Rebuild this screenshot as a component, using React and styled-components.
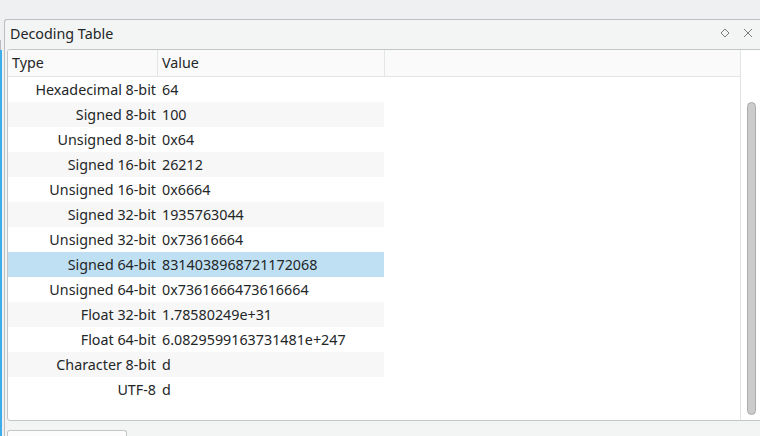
import React from "react";
import styled, { createGlobalStyle } from "styled-components";

const Global = createGlobalStyle`
  html, body { margin: 0; padding: 0; background: #eff0f1; }
  body { font-family: "Noto Sans", "DejaVu Sans", sans-serif; color: #232627; }
  * { box-sizing: border-box; }
`;

const Page = styled.div`
  width: 760px;
  height: 436px;
  overflow: hidden;
  display: flex;
  flex-direction: column;
  background: #eff0f1;
`;

const TopStrip = styled.div`
  height: 19px;
  flex: none;
`;

const Main = styled.div`
  flex: 1;
  display: flex;
  min-height: 0;
`;

const LeftEdge = styled.div`
  width: 4px;
  flex: none;
  display: flex;
  flex-direction: column;
  padding-top: 21px;
`;

const EdgeGray = styled.div`
  width: 1px;
  height: 10px;
  background: #b9bcbf;
`;

const EdgeBlue = styled.div`
  width: 2px;
  flex: 1;
  background: #3daee9;
`;

const Dock = styled.div`
  flex: 1;
  margin-right: -6px;
  display: flex;
  flex-direction: column;
  background: #f3f4f4;
  border-top: 1px solid #bcbfc2;
  border-left: 1px solid #bcbfc2;
  border-top-left-radius: 3px;
`;

const TitleBar = styled.div`
  height: 29px;
  flex: none;
  display: flex;
  align-items: center;
  padding: 0 0 3px 5px;
  font-size: 14.3px;
`;

const Title = styled.div`
  flex: 1;
`;

const TitleButton = styled.div`
  width: 23px;
  height: 16px;
  display: flex;
  align-items: center;
  justify-content: center;
  color: #7b7e81;
`;

const TitleButtons = styled.div`
  display: flex;
  align-items: center;
  margin-right: 7px;
`;

const Frame = styled.div`
  height: 372px;
  flex: none;
  margin-left: 2px;
  display: flex;
  background: #ffffff;
  border: 1px solid #c3c6c9;
  border-radius: 3px;
  overflow: hidden;
`;

const TableArea = styled.div`
  width: 732px;
  flex: none;
  display: flex;
  flex-direction: column;
`;

const HeaderRow = styled.div`
  height: 27px;
  flex: none;
  display: flex;
  background: #fafafa;
  border-bottom: 1px solid #e4e5e6;
  font-size: 14.3px;
`;

const HeaderCell = styled.div`
  width: ${(p) => p.$w}px;
  flex: ${(p) => (p.$grow ? 1 : "none")};
  display: flex;
  align-items: center;
  padding: 0 0 1px 4px;
  border-right: ${(p) => (p.$grow ? "none" : "1px solid #e4e5e6")};
`;

const Row = styled.div`
  height: 25px;
  width: 376px;
  display: flex;
  align-items: center;
  padding-bottom: 1px;
  font-size: 14.3px;
  background: ${(p) => (p.$selected ? "#bfdff3" : p.$alt ? "#f7f7f7" : "#ffffff")};
`;

const TypeCell = styled.div`
  width: 150px;
  flex: none;
  text-align: right;
  padding-right: 2px;
  white-space: nowrap;
`;

const ValueCell = styled.div`
  flex: 1;
  padding-left: 4px;
  white-space: nowrap;
`;

const ScrollColumn = styled.div`
  flex: 1;
  border-left: 1px solid #e3e4e5;
  padding: 52px 0 4px 6px;
  display: flex;
`;

const ScrollHandle = styled.div`
  width: 9px;
  height: 313px;
  background: #cbcbcb;
  border: 1px solid #a9abad;
  border-radius: 5px;
`;

const Bottom = styled.div`
  flex: 1;
  display: flex;
  align-items: flex-end;
  padding-left: 2px;
`;

const BottomTab = styled.div`
  width: 120px;
  height: 6px;
  background: #fcfcfc;
  border: 1px solid #c3c6c9;
  border-bottom: none;
  border-radius: 3px 3px 0 0;
`;

const rows = [
  ["Hexadecimal 8-bit", "64"],
  ["Signed 8-bit", "100"],
  ["Unsigned 8-bit", "0x64"],
  ["Signed 16-bit", "26212"],
  ["Unsigned 16-bit", "0x6664"],
  ["Signed 32-bit", "1935763044"],
  ["Unsigned 32-bit", "0x73616664"],
  ["Signed 64-bit", "8314038968721172068"],
  ["Unsigned 64-bit", "0x7361666473616664"],
  ["Float 32-bit", "1.78580249e+31"],
  ["Float 64-bit", "6.0829599163731481e+247"],
  ["Character 8-bit", "d"],
  ["UTF-8", "d"],
];

const FloatIcon = () => (
  <svg width="10" height="10" viewBox="0 0 10 10">
    <path d="M5 1 L9 5 L5 9 L1 5 Z" fill="none" stroke="currentColor" strokeWidth="1" />
  </svg>
);

const CloseIcon = () => (
  <svg width="10" height="10" viewBox="0 0 10 10">
    <path d="M1 1 L9 9 M9 1 L1 9" fill="none" stroke="currentColor" strokeWidth="1" />
  </svg>
);

export default function App() {
  return (
    <Page>
      <Global />
      <TopStrip />
      <Main>
        <LeftEdge>
          <EdgeGray />
          <EdgeBlue />
        </LeftEdge>
        <Dock>
          <TitleBar>
            <Title>Decoding Table</Title>
            <TitleButtons>
              <TitleButton>
                <FloatIcon />
              </TitleButton>
              <TitleButton>
                <CloseIcon />
              </TitleButton>
            </TitleButtons>
          </TitleBar>
          <Frame>
            <TableArea>
              <HeaderRow>
                <HeaderCell $w={150}>Type</HeaderCell>
                <HeaderCell $w={227}>Value</HeaderCell>
                <HeaderCell $grow />
              </HeaderRow>
              {rows.map(([t, v], i) => (
                <Row key={t} $alt={i % 2 === 1} $selected={i === 7}>
                  <TypeCell>{t}</TypeCell>
                  <ValueCell>{v}</ValueCell>
                </Row>
              ))}
            </TableArea>
            <ScrollColumn>
              <ScrollHandle />
            </ScrollColumn>
          </Frame>
          <Bottom>
            <BottomTab />
          </Bottom>
        </Dock>
      </Main>
    </Page>
  );
}
